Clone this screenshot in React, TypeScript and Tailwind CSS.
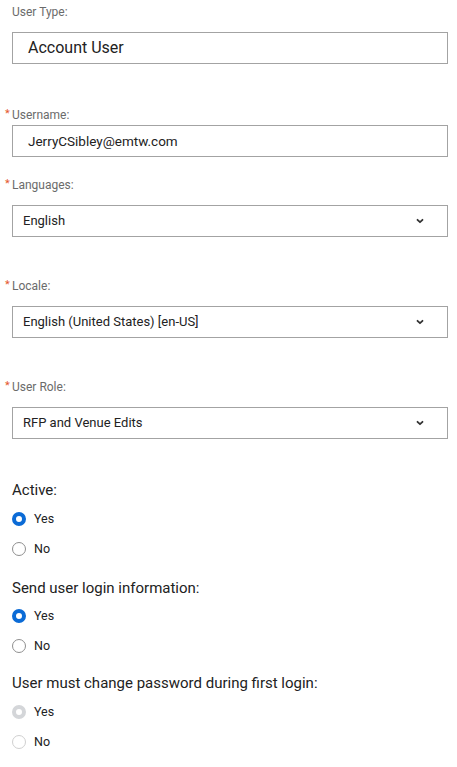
import React from 'react';

function Label({ text, required }: { text: string; required?: boolean }) {
  return (
    <div className="relative h-5 text-[12px] leading-5 text-[#6b6b6b]">
      {required && <span className="absolute -left-[7px] top-[-1px] text-[11px] text-[#e4572e]">*</span>}
      {text}
    </div>
  );
}

function Chevron() {
  return (
    <svg width="10" height="10" viewBox="0 0 10 10" fill="none" stroke="#333" strokeWidth="1.8" strokeLinecap="round" strokeLinejoin="round">
      <path d="M2.5 3.8 5 6.2l2.5-2.4" />
    </svg>
  );
}

function SelectBox({ value }: { value: string }) {
  return (
    <div className="flex h-8 items-center justify-between border border-[#a3a3a3] bg-white pl-[10px] pr-[22px] text-[13px] text-[#222]">
      <span>{value}</span>
      <Chevron />
    </div>
  );
}

function Radio({ label, checked, disabled }: { label: string; checked?: boolean; disabled?: boolean }) {
  let circle = 'border border-[#8f8f8f] bg-white';
  if (checked && !disabled) circle = 'border-[4px] border-[#0b6bd6] bg-white';
  if (checked && disabled) circle = 'border-[4px] border-[#d4d6d9] bg-white';
  if (!checked && disabled) circle = 'border border-[#d0d0d0] bg-white';
  return (
    <div className="flex h-[30px] items-center gap-2">
      <span className={`h-[14px] w-[14px] rounded-full ${circle}`} />
      <span className="text-[12.5px] text-[#222]">{label}</span>
    </div>
  );
}

export default function App() {
  return (
    <div className="min-h-screen w-[457px] bg-white font-['Roboto',sans-serif]">
      <div className="ml-3 w-[436px] pt-[2px]">
        <Label text="User Type:" />
        <div className="mt-[10px] flex h-8 items-center border border-[#a3a3a3] pl-[15px] text-[16px] text-[#222]">
          Account User
        </div>

        <div className="mt-[41px]">
          <Label text="Username:" required />
        </div>
        <div className="flex h-8 items-center border border-[#a3a3a3] pl-[15px] text-[13.5px] text-[#222]">
          JerryCSibley@emtw.com
        </div>

        <div className="mt-[18px]">
          <Label text="Languages:" required />
        </div>
        <div className="mt-[10px]">
          <SelectBox value="English" />
        </div>

        <div className="mt-[39px]">
          <Label text="Locale:" required />
        </div>
        <div className="mt-[10px]">
          <SelectBox value="English (United States) [en-US]" />
        </div>

        <div className="mt-[39px]">
          <Label text="User Role:" required />
        </div>
        <div className="mt-[10px]">
          <SelectBox value="RFP and Venue Edits" />
        </div>

        <div className="mt-[39px] h-6 text-[15px] leading-6 text-[#222]">Active:</div>
        <div className="mt-[2px]">
          <Radio label="Yes" checked />
          <Radio label="No" />
        </div>

        <div className="mt-[12px] h-6 text-[15px] leading-6 text-[#222]">Send user login information:</div>
        <div className="mt-[1px]">
          <Radio label="Yes" checked />
          <Radio label="No" />
        </div>

        <div className="mt-[10px] h-6 text-[15px] leading-6 text-[#222]">User must change password during first login:</div>
        <div className="mt-[2px]">
          <Radio label="Yes" checked disabled />
          <Radio label="No" disabled />
        </div>
      </div>
    </div>
  );
}
